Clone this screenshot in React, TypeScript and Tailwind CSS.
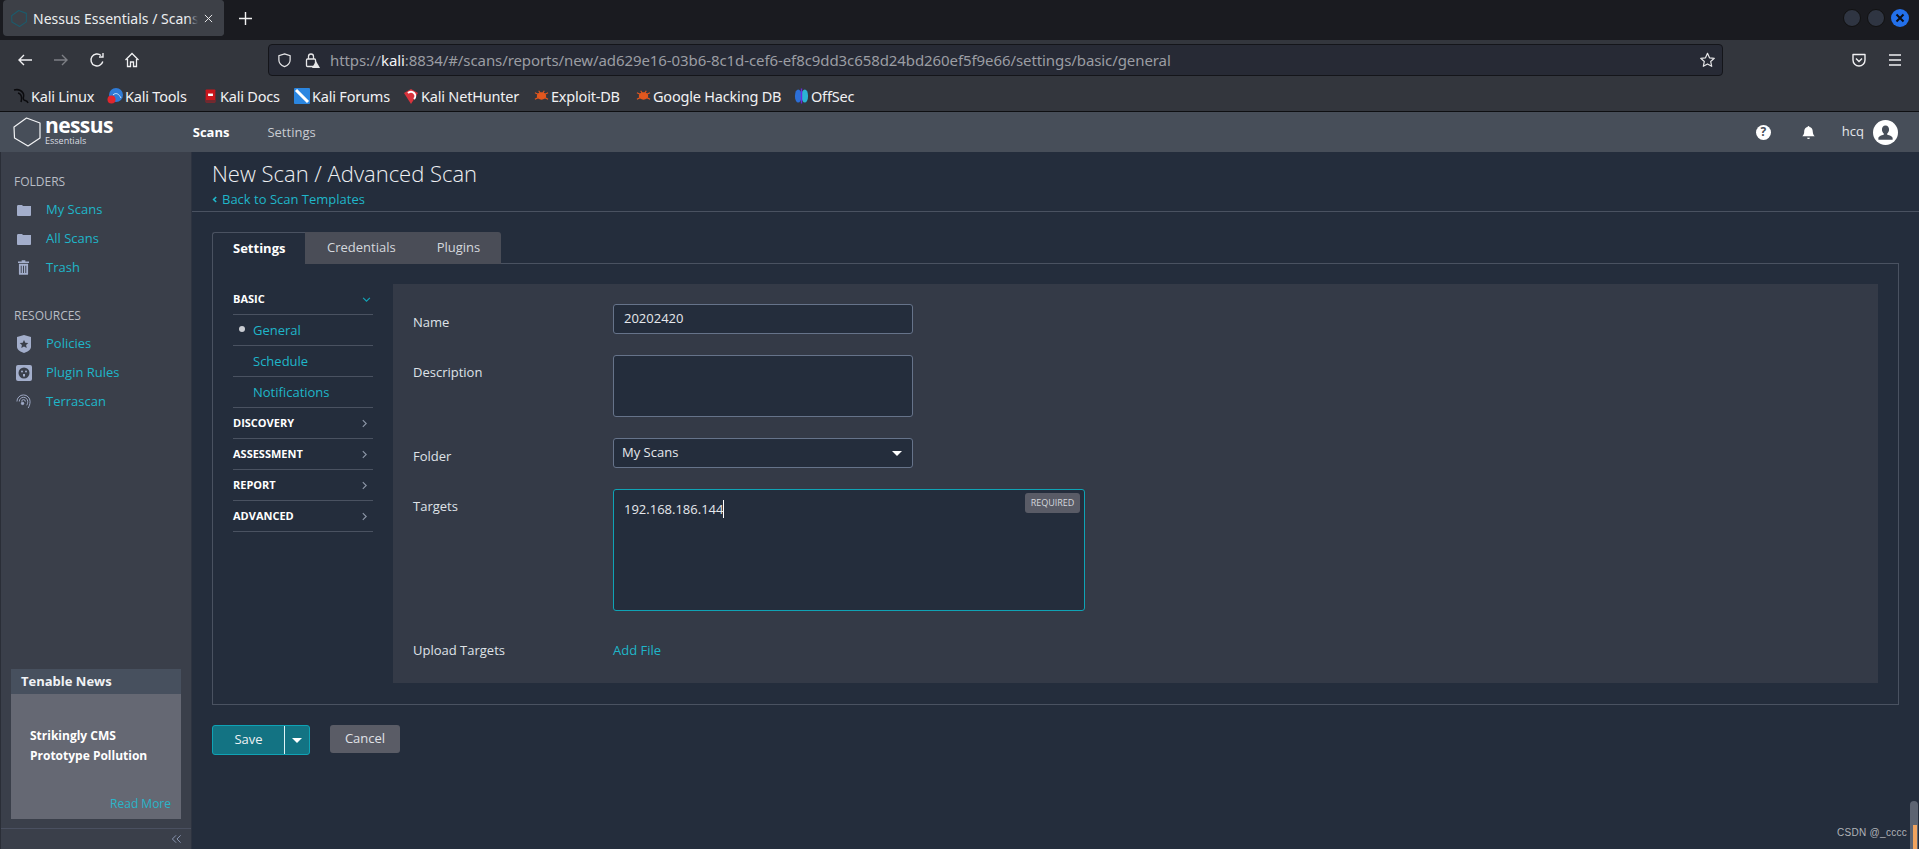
import React from "react";

const Hex = ({ className, stroke, w = 1.2 }: { className: string; stroke: string; w?: number }) => (
  <svg viewBox="0 0 28 30" className={className} fill="none" stroke={stroke} strokeWidth={w}>
    <path d="M13.5 1 L27 6 L27 21 L15 29 L1.500 21 L1 10 Z" strokeLinejoin="round" />
  </svg>
);

const Bookmark = ({ icon, label, w }: { icon: React.ReactNode; label: string; w: string }) => (
  <div className={`flex items-center gap-[2px] h-full ${w}`}>
    <span className="w-[16px] h-[16px] shrink-0 flex items-center justify-center">{icon}</span>
    <span className="text-[14.5px] leading-[18px] text-[#f1f1f3] whitespace-nowrap tracking-[-0.2px]">{label}</span>
  </div>
);

const Bug = () => (
  <svg viewBox="0 0 16 16" className="w-[15px] h-[15px]">
    <ellipse cx="8" cy="8.500" rx="5" ry="4" fill="#e2571e" />
    <path d="M1 5l4 2M1 12l4-2M15 5l-4 2M15 12l-4-2M5 3l2 3M11 3l-2 3" stroke="#e2571e" strokeWidth="1.200" />
  </svg>
);

const Folder = () => (
  <svg viewBox="0 0 14 12" className="w-[14px] h-[12px]" fill="#a3aecb">
    <path d="M0 2.500 C0 1.500 .5 1 1.500 1 H5 L6 2 H14 V11 C14 11.500 13.500 12 13 12 H1 C.5 12 0 11.500 0 11 Z" />
  </svg>
);

const Side = ({ icon, label }: { icon: React.ReactNode; label: string }) => (
  <div className="flex items-center h-[29px] pl-[14px]">
    <span className="w-[17px] h-[20px] flex items-center justify-center">{icon}</span>
    <span className="ml-[14px] text-[13px] text-[#1fb6c9]">{label}</span>
  </div>
);

const Chevron = ({ open }: { open?: boolean }) => (
  <svg viewBox="0 0 8 8" className={open ? "w-[9px] h-[9px] mr-[-2px]" : "w-[9px] h-[9px]"} fill="none" stroke={open ? "#12a5b8" : "#8d97a8"} strokeWidth="1">
    {open ? <path d="M1 2.500 L4 5.500 L7 2.500" /> : <path d="M2.500 1 L5.500 4 L2.500 7" />}
  </svg>
);

const Section = ({ label, open }: { label: string; open?: boolean }) => (
  <div className="h-[31px] border-b border-[#4a5261] flex items-center justify-between pr-[4px] text-[11px] font-bold text-white">
    <span>{label}</span>
    <Chevron open={open} />
  </div>
);

const SubItem = ({ label, active }: { label: string; active?: boolean }) => (
  <div className="h-[31px] border-b border-[#4a5261] flex items-center pl-[20px] pt-[1px] relative text-[13px] text-[#1fb6c9]">
    {active && <span className="absolute left-[6px] top-[11px] w-[6px] h-[6px] rounded-full bg-[#c9ccd2]" />}
    {label}
  </div>
);

const Caret = () => (
  <span className="w-0 h-0 border-l-[5px] border-r-[5px] border-t-[5px] border-l-transparent border-r-transparent border-t-white" />
);

export default function App() {
  return (
    <div className="w-[1919px] h-[849px] overflow-hidden relative flex flex-col bg-[#242d3c] font-['Open_Sans',sans-serif]">
      {/* Browser tab bar */}
      <div className="h-[40px] shrink-0 bg-[#1a1b20] flex items-start pl-[3px] font-['Noto_Sans',sans-serif]">
        <div className="w-[221px] h-[36px] bg-[#3d4047] rounded-[4px] flex items-center pl-[8px] relative overflow-hidden">
          <Hex className="w-[16px] h-[17px]" stroke="#1d5a6b" w={2} />
          <span className="ml-[6px] text-[14px] text-[#eceef0] whitespace-nowrap">Nessus Essentials / Scans</span>
          <span className="absolute left-[185px] top-0 h-full w-[10px] bg-gradient-to-r from-transparent to-[#3d4047]" />
          <span className="absolute right-0 top-0 h-full w-[26px] pr-[6px] bg-[#3d4047] flex items-center justify-center">
            <svg viewBox="0 0 10 10" className="w-[9px] h-[9px]" stroke="#e8e8ea" strokeWidth="1.100"><path d="M1 1L9 9M9 1L1 9" /></svg>
          </span>
        </div>
        <svg viewBox="0 0 12 12" className="w-[13px] h-[13px] ml-[15px] mt-[12px]" stroke="#f2f2f2" strokeWidth="1.300"><path d="M6 0V12M0 6H12" /></svg>
        <div className="ml-auto mr-[10px] mt-[9px] flex gap-[6px]">
          <span className="w-[18px] h-[18px] rounded-full bg-[#2f3542] border border-[#111]" />
          <span className="w-[18px] h-[18px] rounded-full bg-[#2f3542] border border-[#111]" />
          <span className="w-[18px] h-[18px] rounded-full bg-[#2370ea] flex items-center justify-center">
            <svg viewBox="0 0 10 10" className="w-[10px] h-[10px]" stroke="#0b0d14" strokeWidth="2"><path d="M1.500 1.500L8.500 8.500M8.500 1.500L1.500 8.500" /></svg>
          </span>
        </div>
      </div>

      {/* Nav bar */}
      <div className="h-[36px] shrink-0 bg-[#33363d] flex items-start font-['Noto_Sans',sans-serif] relative">
        <div className="flex items-center h-[40px] pl-[17px] w-[268px]">
          <svg viewBox="0 0 16 16" className="w-[16px] h-[16px]" fill="none" stroke="#f0f0f2" strokeWidth="1.400"><path d="M15 8H2M7 3L2 8l5 5" /></svg>
          <svg viewBox="0 0 16 16" className="w-[16px] h-[16px] ml-[20px]" fill="none" stroke="#7d7f85" strokeWidth="1.400"><path d="M1 8h13M9 3l5 5-5 5" /></svg>
          <svg viewBox="0 0 16 16" className="w-[16px] h-[16px] ml-[20px]" fill="none" stroke="#f0f0f2" strokeWidth="1.400"><path d="M13.800 9.500A6 6 0 1 1 12 3.500M14 1v4h-4" /></svg>
          <svg viewBox="0 0 16 16" className="w-[16px] h-[16px] ml-[19px]" fill="none" stroke="#f0f0f2" strokeWidth="1.300"><path d="M1.500 8L8 1.500 14.500 8M3.500 7v7.500h3V10h3v4.500h3V7" /></svg>
        </div>
        <div className="w-[1455px] h-[32px] mt-[4px] bg-[#272a35] border border-[#14151a] rounded-[4px] flex items-center pl-[8px] relative">
          <svg viewBox="0 0 16 16" className="w-[15px] h-[16px]" fill="none" stroke="#e6e6e8" strokeWidth="1.300"><path d="M8 1.500L14 3.500V8C14 11.500 11 14 8 15 5 14 2 11.500 2 8V3.500Z" /></svg>
          <svg viewBox="0 0 16 16" className="w-[16px] h-[16px] ml-[12px]" fill="none" stroke="#e6e6e8" strokeWidth="1.300"><rect x="2.500" y="7" width="9" height="7.500" rx="1" /><path d="M4.500 7V4.500a2.500 2.500 0 0 1 5 0V7" /><path d="M12 9L16 16H8Z" fill="#e6e6e8" stroke="none" /></svg>
          <span className="ml-[10px] text-[15px] text-[#9b9da3] whitespace-nowrap tracking-[-0.085px]">https://<span className="text-[#f4f4f6]">kali</span>:8834/#/scans/reports/new/ad629e16-03b6-8c1d-cef6-ef8c9dd3c658d24bd260ef5f9e66/settings/basic/general</span>
          <svg viewBox="0 0 16 16" className="absolute right-[6px] top-[7px] w-[17px] h-[16px]" fill="none" stroke="#e6e6e8" strokeWidth="1.200"><path d="M8 1.300l2 4.500 4.800.5-3.600 3.200 1 4.800L8 11.900l-4.200 2.400 1-4.800L1.200 6.300 6 5.800Z" strokeLinejoin="round" /></svg>
        </div>
        <svg viewBox="0 0 16 16" className="absolute left-[1851px] top-[12px] w-[16px] h-[16px]" fill="none" stroke="#f0f0f2" strokeWidth="1.400"><path d="M2 2.500H14V8A6 6 0 0 1 2 8Z" strokeLinejoin="round" /><path d="M5 6.500L8 9.500 11 6.500" /></svg>
        <svg viewBox="0 0 16 16" className="absolute left-[1887px] top-[12px] w-[16px] h-[16px]" stroke="#f0f0f2" strokeWidth="1.300"><path d="M2 3H14M2 8H14M2 13H14" /></svg>
      </div>

      {/* Bookmarks */}
      <div className="h-[36px] shrink-0 bg-[#33363d] border-b border-[#0e0f12] flex items-center pl-[13px] pt-[4px] font-['Noto_Sans',sans-serif]">
        <Bookmark w="w-[94px]" label="Kali Linux" icon={<svg viewBox="0 0 16 16" className="w-[16px] h-[16px]" fill="none" stroke="#0b0b0e" strokeWidth="1.500"><path d="M1 2C5 1 8 2 10 5 12 8 9 10 11 12 12 13 14 12 15 15M5 5C9 6 9 10 8 14" /></svg>} />
        <Bookmark w="w-[95px]" label="Kali Tools" icon={<svg viewBox="0 0 16 16" className="w-[16px] h-[16px]"><circle cx="9" cy="7" r="7" fill="#2f7bd6" /><path d="M6 7C9 4 12 6 14 10" stroke="#cfe4fa" strokeWidth="1" fill="none" /><circle cx="4.500" cy="11.500" r="4" fill="#e1262d" /></svg>} />
        <Bookmark w="w-[92px]" label="Kali Docs" icon={<svg viewBox="0 0 16 16" className="w-[13px] h-[16px]"><rect x="2" y="0" width="12" height="16" rx="1" fill="#c9161c" /><rect x="2" y="13" width="12" height="3" fill="#6e2a30" /><rect x="5" y="5" width="6" height="3" fill="#fff" /></svg>} />
        <Bookmark w="w-[109px]" label="Kali Forums" icon={<svg viewBox="0 0 16 16" className="w-[16px] h-[16px]"><rect width="16" height="16" rx="1" fill="#2b86e0" /><path d="M2 2L14 14" stroke="#fff" strokeWidth="3" /></svg>} />
        <Bookmark w="w-[130px]" label="Kali NetHunter" icon={<svg viewBox="0 0 16 16" className="w-[16px] h-[16px]"><path d="M1 5L8 1l7 4-7 11Z" fill="#d8333c" /><path d="M5 5a4 4 0 0 1 6 6" stroke="#fff" strokeWidth="2" fill="none" /></svg>} />
        <Bookmark w="w-[102px]" label="Exploit-DB" icon={<Bug />} />
        <Bookmark w="w-[158px]" label="Google Hacking DB" icon={<Bug />} />
        <Bookmark w="w-[70px]" label="OffSec" icon={<svg viewBox="0 0 16 16" className="w-[15px] h-[16px]"><ellipse cx="4.500" cy="8" rx="3.500" ry="7" fill="#2c6fd8" /><ellipse cx="11.500" cy="8" rx="3.500" ry="7" fill="#2bb3d4" /><path d="M8 0V16" stroke="#6a2bd8" strokeWidth="1.500" /></svg>} />
      </div>

      {/* Nessus header */}
      <div className="h-[40px] shrink-0 bg-[#474e59] flex items-center relative">
        <Hex className="ml-[13px] w-[28px] h-[30px]" stroke="#f2f3f5" />
        <div className="ml-[4px] flex flex-col text-white mt-[-2px]">
          <span className="text-[21px] leading-[19px] font-bold tracking-[-0.6px]">nessus</span>
          <span className="text-[9px] leading-[11px] text-[#d9dce0]">Essentials</span>
        </div>
        <span className="ml-[80px] mt-[1px] text-[13px] font-bold text-white">Scans</span>
        <span className="ml-[38px] mt-[1px] text-[13px] text-[#c9ccd2]">Settings</span>
        <div className="ml-auto flex items-center pr-[21px]">
          <span className="w-[15px] h-[15px] rounded-full bg-white flex items-center justify-center text-[12px] font-bold text-[#474e59] leading-none">?</span>
          <svg viewBox="0 0 16 16" className="w-[15px] h-[17px] ml-[30px]" fill="#fff"><path d="M8 1a1 1 0 0 1 1 1c3 .6 3.600 3 3.600 5.500 0 2 1 3.500 2 4.500H1.400c1-1 2-2.500 2-4.500C3.400 5 4 2.600 7 2a1 1 0 0 1 1-1ZM6.500 13.500h3a1.500 1.500 0 0 1-3 0Z" /></svg>
          <span className="ml-[26px] text-[13px] text-[#e4e6ea]">hcq</span>
          <span className="ml-[9px] w-[25px] h-[25px] rounded-full bg-white flex items-center justify-center overflow-hidden">
            <svg viewBox="0 0 24 24" className="w-[19px] h-[19px]" fill="#474e59"><path d="M12 3c3 0 4.500 2.200 4.500 5.200 0 2.300-1 4-2.300 5v1.600c3 .8 6.800 2 6.800 4.200V21H3v-2c0-2.200 3.800-3.400 6.800-4.200v-1.600c-1.300-1-2.300-2.700-2.300-5C7.500 5.200 9 3 12 3Z" /></svg>
          </span>
        </div>
      </div>

      <div className="flex-1 flex min-h-0">
        {/* Sidebar */}
        <aside className="w-[192px] shrink-0 bg-[#3a3f4a] border-l border-[#2a2e37] border-r border-r-[#2d3340] flex flex-col">
          <div className="mt-[21px] pl-[13px] text-[12px] leading-[18px] text-[#b9bdc5]">FOLDERS</div>
          <div className="mt-[4px]">
            <Side icon={<Folder />} label="My Scans" />
            <Side icon={<Folder />} label="All Scans" />
            <Side label="Trash" icon={<svg viewBox="0 0 12 16" className="w-[11px] h-[15px]" fill="#a3aecb"><path d="M4 0h4v1.500h4V3H0V1.500h4ZM1 4h10v11a1 1 0 0 1-1 1H2a1 1 0 0 1-1-1ZM3 6v8h1V6Zm2.500 0v8h1V6ZM8 6v8h1V6Z" fillRule="evenodd" /></svg>} />
          </div>
          <div className="mt-[25px] pl-[13px] text-[12px] leading-[18px] text-[#b9bdc5]">RESOURCES</div>
          <div className="mt-[4px]">
            <Side label="Policies" icon={<svg viewBox="0 0 14 18" className="w-[14px] h-[18px]"><path d="M7 0L14 2V12C14 15 10 17 7 18 4 17 0 15 0 12V2Z" fill="#a3aecb" /><path d="M7 5l1.300 2.800 3 .3-2.200 2 .6 3L7 11.600 4.300 13.100l.6-3-2.200-2 3-.3Z" fill="#3a3f4a" /></svg>} />
            <Side label="Plugin Rules" icon={<svg viewBox="0 0 16 16" className="w-[16px] h-[16px]"><rect width="16" height="16" rx="2" fill="#a3aecb" /><circle cx="8" cy="8" r="5.500" fill="#3a3f4a" /><circle cx="6" cy="6.500" r="1" fill="#a3aecb" /><circle cx="10" cy="6.500" r="1" fill="#a3aecb" /><rect x="7" y="9" width="2" height="2.500" fill="#a3aecb" /></svg>} />
            <Side label="Terrascan" icon={<svg viewBox="0 0 16 16" className="w-[15px] h-[15px]" fill="none" stroke="#a3aecb" strokeWidth="1"><path d="M1 8a7 7 0 0 1 14 0c0 3-1 5-2 7M3.500 8a4.500 4.500 0 0 1 9 0c0 2-.5 3-1 4M6 8a2 2 0 0 1 4 0" /><circle cx="7" cy="10" r="1.300" fill="#a3aecb" /></svg>} />
          </div>
          <div className="mt-auto mx-[10px] w-[170px] h-[150px] flex flex-col">
            <div className="h-[25px] bg-[#47505e] pl-[10px] flex items-center text-[13px] font-bold text-[#f0f2f5]">Tenable News</div>
            <div className="flex-1 bg-[#656873] flex flex-col pl-[19px] pr-[10px]">
              <div className="mt-[32px] text-[12px] font-bold text-white leading-[20px]">Strikingly CMS<br />Prototype Pollution</div>
              <div className="mt-auto mb-[6px] text-right text-[12px] text-[#29b5c9] leading-[18px]">Read More</div>
            </div>
          </div>
          <div className="mt-[9px] h-[21px] border-t border-[#4a5060] flex items-center justify-end pr-[9px]">
            <svg viewBox="0 0 12 10" className="w-[11px] h-[10px]" fill="none" stroke="#8f9cba" strokeWidth="1"><path d="M5.500 1L1.500 5 5.500 9M10.500 1L6.500 5 10.500 9" /></svg>
          </div>
        </aside>

        {/* Main */}
        <main className="flex-1 min-w-0">
          <div className="h-[60px] border-b border-[#4a5261] pl-[20px]">
            <h1 className="pt-[7px] text-[22px] leading-[28px] font-light text-[#eef0f3]">New Scan / Advanced Scan</h1>
            <div className="mt-[4px] flex items-center text-[13px] leading-[16px] text-[#1fb6c9]">
              <svg viewBox="0 0 6 8" className="w-[5px] h-[7px] mr-[5px]" fill="none" stroke="#1fb6c9" strokeWidth="2"><path d="M5 1L2 4l3 3" /></svg>
              Back to Scan Templates
            </div>
          </div>

          <div className="ml-[20px] mt-[20px] w-[1687px]">
            <div className="flex h-[32px]">
              <div className="w-[93px] border-t border-l border-[#4a5261] rounded-tl-[3px] flex items-center pl-[20px] text-[13px] font-bold text-white">Settings</div>
              <div className="w-[196px] bg-[#4a4d57] rounded-tr-[3px] flex items-center pl-[22px] text-[13px] text-[#d5d8dd]">
                <span>Credentials</span>
                <span className="ml-[41px]">Plugins</span>
              </div>
              <div className="flex-1 border-b border-[#4a5261]" />
            </div>
            <div className="border-l border-r border-b border-[#4a5261] h-[441px] flex pl-[20px] pr-[20px] pt-[20px]">
              <nav className="w-[140px] shrink-0">
                <Section label="BASIC" open />
                <SubItem label="General" active />
                <SubItem label="Schedule" />
                <SubItem label="Notifications" />
                <Section label="DISCOVERY" />
                <Section label="ASSESSMENT" />
                <Section label="REPORT" />
                <Section label="ADVANCED" />
              </nav>
              <section className="ml-[20px] flex-1 h-[399px] bg-[#343a47] pl-[20px] pt-[20px] text-[13px] text-[#dfe2e7]">
                <div className="flex h-[30px]">
                  <div className="w-[200px] pt-[9px] leading-[18px]">Name</div>
                  <div className="w-[300px] h-[30px] bg-[#242d3c] border border-[#66738a] rounded-[3px] pl-[10px] flex items-center text-[#e6e8ec]">20202420</div>
                </div>
                <div className="flex mt-[21px] h-[62px]">
                  <div className="w-[200px] pt-[8px] leading-[18px]">Description</div>
                  <div className="w-[300px] bg-[#242d3c] border border-[#66738a] rounded-[3px]" />
                </div>
                <div className="flex mt-[21px] h-[30px]">
                  <div className="w-[200px] pt-[9px] leading-[18px]">Folder</div>
                  <div className="w-[300px] bg-[#242d3c] border border-[#66738a] rounded-[3px] pl-[8px] pr-[10px] flex items-center justify-between text-[#e6e8ec]">
                    My Scans
                    <Caret />
                  </div>
                </div>
                <div className="flex mt-[21px] h-[122px]">
                  <div className="w-[200px] pt-[8px] leading-[18px]">Targets</div>
                  <div className="w-[472px] bg-[#242d3c] border border-[#0fa3b5] rounded-[3px] relative pl-[10px] pt-[10px] leading-[18px] text-[#e6e8ec]">
                    <span className="border-r border-white pr-0">192.168.186.144</span>
                    <span className="absolute right-[4px] top-[3px] w-[55px] h-[20px] bg-[#595b66] rounded-[3px] flex items-center justify-center text-[9px] text-[#d5d8dd]">REQUIRED</span>
                  </div>
                </div>
                <div className="flex mt-[30px] leading-[18px]">
                  <div className="w-[200px]">Upload Targets</div>
                  <div className="text-[#1fb6c9]">Add File</div>
                </div>
              </section>
            </div>
            <div className="flex items-start mt-[20px]">
              <div className="w-[98px] h-[30px] bg-[#137383] border border-[#0fa3b5] rounded-[3px] flex text-[13px] text-[#eef1f4]">
                <span className="w-[72px] border-r border-[#dff3f6] flex items-center justify-center">Save</span>
                <span className="flex-1 flex items-center justify-center"><Caret /></span>
              </div>
              <div className="ml-[20px] w-[70px] h-[28px] bg-[#5a5c66] rounded-[3px] flex items-center justify-center text-[13px] text-[#e0e2e6]">Cancel</div>
            </div>
          </div>
        </main>
      </div>

      {/* Scrollbar and watermark overlay */}
      <div className="absolute left-[1910px] top-[801px] w-[8px] h-[48px] bg-[#5d6472] rounded-t-[4px]">
        <div className="absolute left-[3px] top-[24px] w-[4px] h-[24px] bg-[#f0a35e]" />
      </div>
      <span className="absolute left-[1837px] top-[826px] text-[10px] leading-[14px] text-[#b0b3b8] font-['Liberation_Sans',sans-serif] tracking-[0.3px]">CSDN @_cccc</span>
    </div>
  );
}
